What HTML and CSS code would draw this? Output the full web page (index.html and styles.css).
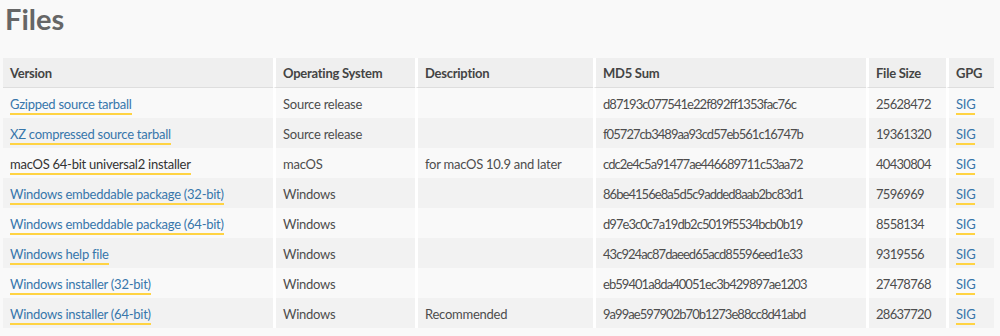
FILE: index.html
```html
<!DOCTYPE html>
<html lang="en">
<head>
    <meta charset="UTF-8">
    <title>Files</title>
    <link rel="stylesheet" href="styles.css">
</head>
<body>
    <h2 class="files-title">Files</h2>

    <table class="files">
        <thead>
            <tr>
                <th class="col-version">Version</th>
                <th class="col-os">Operating System</th>
                <th class="col-desc">Description</th>
                <th class="col-md5">MD5 Sum</th>
                <th class="col-size">File Size</th>
                <th class="col-gpg">GPG</th>
            </tr>
        </thead>
        <tbody>
            <tr>
                <td><a href="#">Gzipped source tarball</a></td>
                <td>Source release</td>
                <td></td>
                <td class="md5">d87193c077541e22f892ff1353fac76c</td>
                <td class="num">25628472</td>
                <td><a href="#">SIG</a></td>
            </tr>
            <tr>
                <td><a href="#">XZ compressed source tarball</a></td>
                <td>Source release</td>
                <td></td>
                <td class="md5">f05727cb3489aa93cd57eb561c16747b</td>
                <td class="num">19361320</td>
                <td><a href="#">SIG</a></td>
            </tr>
            <tr>
                <td><a href="#" class="visited">macOS 64-bit universal2 installer</a></td>
                <td>macOS</td>
                <td>for macOS 10.9 and later</td>
                <td class="md5">cdc2e4c5a91477ae446689711c53aa72</td>
                <td class="num">40430804</td>
                <td><a href="#">SIG</a></td>
            </tr>
            <tr>
                <td><a href="#">Windows embeddable package (32-bit)</a></td>
                <td>Windows</td>
                <td></td>
                <td class="md5">86be4156e8a5d5c9added8aab2bc83d1</td>
                <td class="num">7596969</td>
                <td><a href="#">SIG</a></td>
            </tr>
            <tr>
                <td><a href="#">Windows embeddable package (64-bit)</a></td>
                <td>Windows</td>
                <td></td>
                <td class="md5">d97e3c0c7a19db2c5019f5534bcb0b19</td>
                <td class="num">8558134</td>
                <td><a href="#">SIG</a></td>
            </tr>
            <tr>
                <td><a href="#">Windows help file</a></td>
                <td>Windows</td>
                <td></td>
                <td class="md5">43c924ac87daeed65acd85596eed1e33</td>
                <td class="num">9319556</td>
                <td><a href="#">SIG</a></td>
            </tr>
            <tr>
                <td><a href="#">Windows installer (32-bit)</a></td>
                <td>Windows</td>
                <td></td>
                <td class="md5">eb59401a8da40051ec3b429897ae1203</td>
                <td class="num">27478768</td>
                <td><a href="#">SIG</a></td>
            </tr>
            <tr>
                <td><a href="#">Windows installer (64-bit)</a></td>
                <td>Windows</td>
                <td>Recommended</td>
                <td class="md5">9a99ae597902b70b1273e88cc8d41abd</td>
                <td class="num">28637720</td>
                <td><a href="#">SIG</a></td>
            </tr>
        </tbody>
    </table>
</body>
</html>
```

FILE: styles.css
```css
:root {
    --text-color: #4d4d4d;
    --title-color: #666;
    --link-color: #3776ab;
    --underline-color: #ffd343;
    --page-background: #f9f9f9;
    --head-background: #efefef;
    --row-odd: #f9f9f9;
    --row-even: #f2f2f2;
}

body {
    font-family: Lato, "Noto Sans", sans-serif;
    font-size: 13px;
    color: var(--text-color);
    background-color: var(--page-background);
    margin: 0;
    padding: 0 6px 0 3px;
}

.files-title {
    font-size: 29px;
    font-weight: 700;
    color: var(--title-color);
    margin: 0 0 20px 2px;
    line-height: 38px;
}

.files {
    width: 991px;
    border-collapse: separate;
    border-spacing: 0;
    font-size: 13px;
    letter-spacing: -0.25px;
}

.files th,
.files td {
    text-align: left;
    padding: 1px 7px 0;
    border-left: 3px solid #fff;
    white-space: nowrap;
}

.files th:first-child,
.files td:first-child {
    border-left: none;
}

.files th {
    height: 28px;
    font-weight: 700;
    color: #444;
    background-color: var(--head-background);
    border-bottom: 1px solid #dedede;
}

.files td {
    height: 29px;
    background-color: var(--row-odd);
}

.files td.md5 {
    letter-spacing: -0.95px;
}

.files td.num {
    letter-spacing: -0.7px;
}

.files tbody tr:nth-child(even) td {
    background-color: var(--row-even);
}

.col-version { width: 256px; }
.col-os { width: 125px; }
.col-desc { width: 161px; }
.col-md5 { width: 256px; }
.col-size { width: 63px; }
.col-gpg { width: 31px; }

.files a {
    color: var(--link-color);
    text-decoration: none;
    border-bottom: 2px solid var(--underline-color);
    padding-bottom: 1px;
}

.files a.visited {
    color: #333;
}
```
